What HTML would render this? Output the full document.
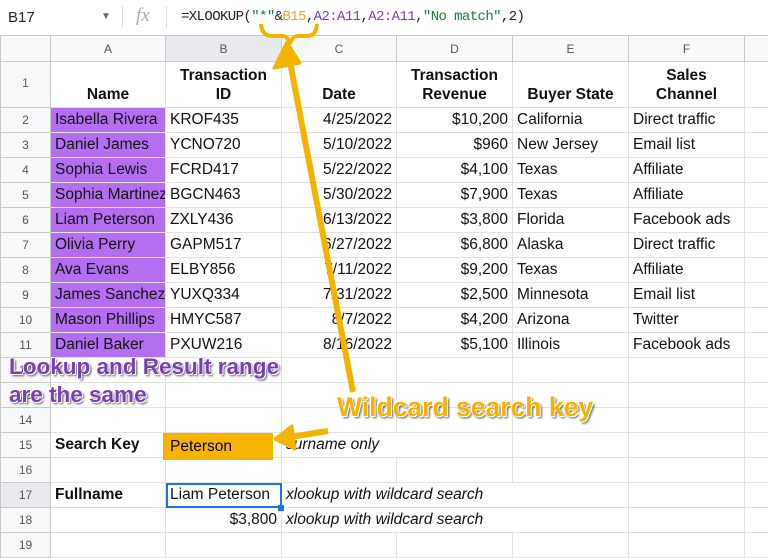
<!DOCTYPE html>
<html><head><style>
body{margin:0;width:768px;height:548px;overflow:hidden;background:#fff;font-family:"Liberation Sans",Arial,sans-serif;position:relative}
.fb{position:absolute;left:0;top:0;width:768px;height:35px;background:#fff;border-bottom:1px solid #c8c8c8}
table{position:absolute;left:0;top:35px;border-collapse:collapse;table-layout:fixed;width:784px}
td{border:1px solid #e2e2e2;padding:0 4px;font-size:15.5px;color:#111;white-space:nowrap;overflow:hidden;height:25px;box-sizing:border-box}
tr{height:25px}
tr.h{height:26px}
tr.h td{background:#f8f9fa;color:#555;font-size:12px;text-align:center;height:26px;border-color:#c8c8c8}
td.n{background:#f8f9fa;color:#555;font-size:12px;text-align:center;border-color:#c8c8c8}
tr.r1{height:46px}
tr.r1 td{height:46px;vertical-align:bottom;font-weight:bold;text-align:center;line-height:19px;padding-bottom:3px}
tr.r1 td.n{vertical-align:middle;font-weight:normal}
.p{background:#b36ef2}
.r{text-align:right}
.i{font-style:italic}
.b{font-weight:bold}
</style></head><body>
<div class="fb">
<span style="position:absolute;left:8px;top:9px;font-size:15px;color:#222">B17</span>
<span style="position:absolute;left:101px;top:11px;font-size:10px;color:#666">▼</span>
<div style="position:absolute;left:122px;top:6px;width:1px;height:22px;background:#ddd"></div>
<span style="position:absolute;left:136px;top:5px;font-size:19px;font-style:italic;color:#aaa;font-family:'Liberation Serif',serif">fx</span>
<div style="position:absolute;left:166px;top:6px;width:1px;height:22px;background:#ddd"></div>
<span style="position:absolute;left:181px;top:9px;font-size:14px;font-family:'Liberation Mono',monospace;letter-spacing:-0.6px;color:#222">=XLOOKUP(<span style="color:#188038">"*"</span>&amp;<span style="color:#e8a33a">B15</span>,<span style="color:#7b3fa0">A2:A11</span>,<span style="color:#7b3fa0">A2:A11</span>,<span style="color:#188038">"No match"</span>,2)</span>
</div>
<table>
<colgroup><col style="width:50px"><col style="width:115px"><col style="width:116px"><col style="width:115px"><col style="width:116px"><col style="width:116px"><col style="width:116px"><col style="width:40px"></colgroup>
<tr class="h"><td></td><td>A</td><td style="background:#e8eaed">B</td><td>C</td><td>D</td><td>E</td><td>F</td><td></td></tr>
<tr class="r1"><td class="n">1</td><td>Name</td><td>Transaction<br>ID</td><td>Date</td><td>Transaction<br>Revenue</td><td>Buyer State</td><td>Sales<br>Channel</td><td></td></tr>
<tr><td class="n">2</td><td class="p">Isabella Rivera</td><td>KROF435</td><td class="r">4/25/2022</td><td class="r">$10,200</td><td>California</td><td>Direct traffic</td><td></td></tr>
<tr><td class="n">3</td><td class="p">Daniel James</td><td>YCNO720</td><td class="r">5/10/2022</td><td class="r">$960</td><td>New Jersey</td><td>Email list</td><td></td></tr>
<tr><td class="n">4</td><td class="p">Sophia Lewis</td><td>FCRD417</td><td class="r">5/22/2022</td><td class="r">$4,100</td><td>Texas</td><td>Affiliate</td><td></td></tr>
<tr><td class="n">5</td><td class="p">Sophia Martinez</td><td>BGCN463</td><td class="r">5/30/2022</td><td class="r">$7,900</td><td>Texas</td><td>Affiliate</td><td></td></tr>
<tr><td class="n">6</td><td class="p">Liam Peterson</td><td>ZXLY436</td><td class="r">6/13/2022</td><td class="r">$3,800</td><td>Florida</td><td>Facebook ads</td><td></td></tr>
<tr><td class="n">7</td><td class="p">Olivia Perry</td><td>GAPM517</td><td class="r">6/27/2022</td><td class="r">$6,800</td><td>Alaska</td><td>Direct traffic</td><td></td></tr>
<tr><td class="n">8</td><td class="p">Ava Evans</td><td>ELBY856</td><td class="r">7/11/2022</td><td class="r">$9,200</td><td>Texas</td><td>Affiliate</td><td></td></tr>
<tr><td class="n">9</td><td class="p">James Sanchez</td><td>YUXQ334</td><td class="r">7/31/2022</td><td class="r">$2,500</td><td>Minnesota</td><td>Email list</td><td></td></tr>
<tr><td class="n">10</td><td class="p">Mason Phillips</td><td>HMYC587</td><td class="r">8/7/2022</td><td class="r">$4,200</td><td>Arizona</td><td>Twitter</td><td></td></tr>
<tr><td class="n">11</td><td class="p">Daniel Baker</td><td>PXUW216</td><td class="r">8/16/2022</td><td class="r">$5,100</td><td>Illinois</td><td>Facebook ads</td><td></td></tr>
<tr><td class="n">12</td><td></td><td></td><td></td><td></td><td></td><td></td><td></td></tr>
<tr><td class="n">13</td><td></td><td></td><td></td><td></td><td></td><td></td><td></td></tr>
<tr><td class="n">14</td><td></td><td></td><td></td><td></td><td></td><td></td><td></td></tr>
<tr><td class="n">15</td><td class="b">Search Key</td><td></td><td class="i" colspan="2">surname only</td><td></td><td></td><td></td></tr>
<tr><td class="n">16</td><td></td><td></td><td></td><td></td><td></td><td></td><td></td></tr>
<tr><td class="n" style="background:#e8eaed">17</td><td class="b">Fullname</td><td style="outline:2px solid #1a73e8;outline-offset:-2px">Liam Peterson</td><td class="i" colspan="3">xlookup with wildcard search</td><td></td><td></td></tr>
<tr><td class="n">18</td><td></td><td class="r">$3,800</td><td class="i" colspan="3">xlookup with wildcard search</td><td></td><td></td></tr>
<tr><td class="n">19</td><td></td><td></td><td></td><td></td><td></td><td></td><td></td></tr>
</table>
<div style="position:absolute;left:163px;top:433px;width:110px;height:27px;background:#f6b400;font-size:15.5px;line-height:27px;padding-left:7px;box-sizing:border-box">Peterson</div>
<div style="position:absolute;left:278px;top:505px;width:6px;height:6px;background:#1a73e8"></div>
<svg style="position:absolute;left:0;top:0" width="768" height="548">
<path d="M261 24 Q262 36 272 36 L282 36 Q288 36 290 44 Q292 36 298 36 L308 36 Q316 36 317 24" fill="none" stroke="#f5b301" stroke-width="4"/>
<line x1="353" y1="392" x2="290" y2="62" stroke="#f5b301" stroke-width="6"/>
<path d="M287 42 L274 68 L300 63 Z" fill="#f5b301" stroke="#f5b301" stroke-width="3" stroke-linejoin="round"/>
<line x1="328" y1="431" x2="290" y2="437" stroke="#f5b301" stroke-width="6"/>
<path d="M275 439 L292 426 L295 449 Z" fill="#f5b301" stroke="#f5b301" stroke-width="3" stroke-linejoin="round"/>
</svg>
<div style="position:absolute;left:9px;top:353px;font-size:22.5px;font-weight:bold;color:#7a3fb0;line-height:28px;text-shadow:1px 1px 0 #fff,-1px -1px 0 #fff,2px 2px 2px #555">Lookup and Result range<br>are the same</div>
<div style="position:absolute;left:337px;top:392px;font-size:26.5px;font-weight:bold;color:#f5b301;text-shadow:1px 1px 0 #fff,-1px -1px 0 #fff,2px 2px 2px #555">Wildcard search key</div>
</body></html>
